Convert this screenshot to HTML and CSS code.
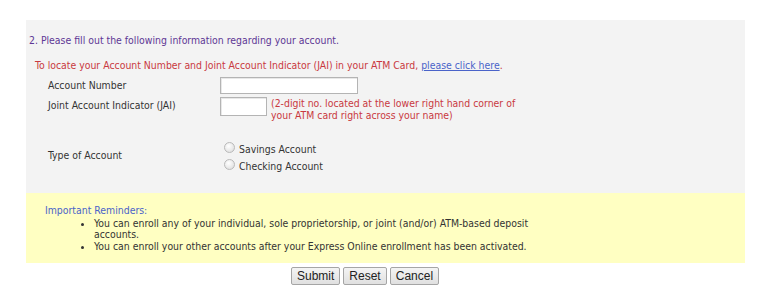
FILE: index.html
```html
<!DOCTYPE html>
<html>
<head>
<meta charset="utf-8">
<link rel="stylesheet" href="styles.css">
</head>
<body>
<div class="panel">
  <div class="form-area">
    <div class="step">2. Please fill out the following information regarding your account.</div>
    <div class="locate">To locate your Account Number and Joint Account Indicator (JAI) in your ATM Card, <a href="#" class="link">please click here</a>.</div>
    <div class="fields">
      <div class="label">Account Number</div>
      <div class="field"><div class="textbox acct"></div></div>
      <div class="label">Joint Account Indicator (JAI)</div>
      <div class="field jai-row"><div class="textbox jai"></div><span class="hint">(2-digit no. located at the lower right hand corner of your ATM card right across your name)</span></div>
      <div class="label type-label">Type of Account</div>
      <div class="field radios">
        <label class="radio"><input type="radio" name="t"> Savings Account</label>
        <label class="radio"><input type="radio" name="t"> Checking Account</label>
      </div>
    </div>
  </div>
  <div class="reminders">
    <div class="rem-title">Important Reminders:</div>
    <ul class="rem-list">
      <li>You can enroll any of your individual, sole proprietorship, or joint (and/or) ATM-based deposit accounts.</li>
      <li>You can enroll your other accounts after your Express Online enrollment has been activated.</li>
    </ul>
  </div>
</div>
<div class="buttons">
  <button class="btn">Submit</button>
  <button class="btn">Reset</button>
  <button class="btn">Cancel</button>
</div>
</body>
</html>
```
FILE: styles.css
```css
html, body {
  margin: 0;
  padding: 0;
  background: #ffffff;
}
body {
  font-family: "DejaVu Sans Condensed", "DejaVu Sans", Verdana, sans-serif;
  font-size: 10.4px;
  color: #333333;
}
.panel {
  margin: 20px 0 0 26px;
  width: 719px;
}
.form-area {
  background: #f3f3f3;
  padding: 14px 0 0 3px;
  height: 159px;
}
.step {
  color: #5e3795;
  line-height: 13px;
}
.locate {
  color: #c9393f;
  margin: 12px 0 0 6px;
  line-height: 13px;
}
.link {
  color: #4a63c9;
  text-decoration: underline;
}
.fields {
  display: grid;
  grid-template-columns: 172px 400px;
  margin: 5px 0 0 19px;
  row-gap: 3px;
}
.label {
  line-height: 13px;
  padding-top: 2px;
}
.textbox {
  border: 1px solid #b4b4b4;
  background: #fff;
  box-sizing: border-box;
  box-shadow: inset 1px 1px 0 #e8e8e8;
}
.acct {
  width: 138px;
  height: 17px;
}
.jai-row {
  display: flex;
  align-items: flex-start;
}
.jai {
  width: 47px;
  height: 19px;
  flex: none;
}
.hint {
  color: #c9393f;
  line-height: 12px;
  width: 255px;
  margin-left: 4px;
}
.type-label {
  margin-top: 16px;
  padding-top: 9px;
}
.radios {
  margin-top: 19px;
  display: flex;
  flex-direction: column;
  gap: 5px;
}
.radio {
  display: flex;
  align-items: center;
  line-height: 12px;
}
.radio input {
  -webkit-appearance: none;
  appearance: none;
  margin: 0 4px 0 4px;
  width: 11px;
  height: 11px;
  border-radius: 50%;
  border: 1px solid #b9b9b9;
  background: radial-gradient(circle at 40% 35%, #ffffff, #d9d9d9);
  position: relative;
  top: -2px;
}
.reminders {
  background: #ffffc2;
  height: 70px;
  padding: 11px 0 0 19px;
  box-sizing: border-box;
}
.rem-title {
  color: #4a63c9;
  line-height: 13px;
}
.rem-list {
  margin: 0;
  padding-left: 49px;
  width: 445px;
}
.rem-list li {
  line-height: 11px;
  margin-top: 1px;
}
.buttons {
  margin: 4px 0 0 291px;
  display: flex;
  gap: 3px;
}
.btn {
  font-family: "Liberation Sans", Arial, sans-serif;
  font-size: 12px;
  color: #222;
  background: linear-gradient(#f4f4f4, #e0e0e0);
  border: 1px solid #a5a5a5;
  border-radius: 2px;
  height: 18px;
  padding: 0 5px;
  line-height: 16px;
}
```
